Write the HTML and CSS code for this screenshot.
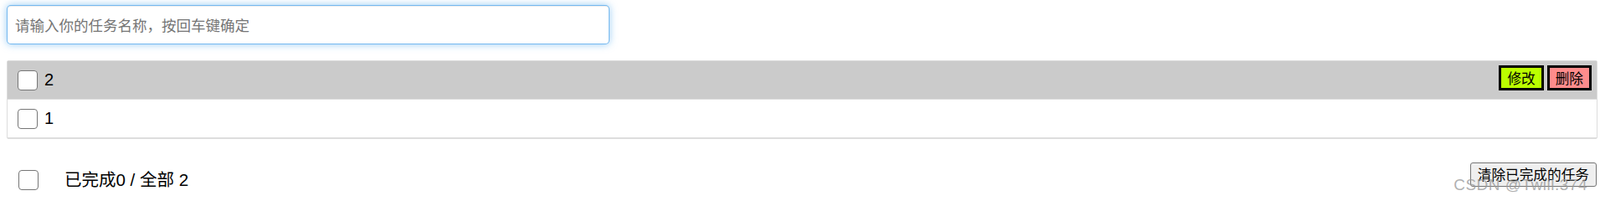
FILE: index.html
```html
<!DOCTYPE html>
<html lang="zh-CN">
<head>
<meta charset="utf-8">
<title>Todo</title>
<link rel="stylesheet" href="styles.css">
</head>
<body>
<div class="app">
  <div class="todo-header">
    <input class="todo-input" type="text" placeholder="请输入你的任务名称，按回车键确定">
  </div>
  <ul class="todo-main">
    <li class="todo-item is-hover">
      <label class="item-label"><input class="box" type="checkbox"><span class="item-text">2</span></label>
      <div class="item-actions">
        <button class="btn btn-edit">修改</button>
        <button class="btn btn-del">删除</button>
      </div>
    </li>
    <li class="todo-item">
      <label class="item-label"><input class="box" type="checkbox"><span class="item-text">1</span></label>
    </li>
  </ul>
  <div class="todo-footer">
    <label class="footer-label"><input class="box box-all" type="checkbox"><span class="footer-text">已完成0 / 全部 2</span></label>
    <button class="btn-clear">清除已完成的任务</button>
  </div>
  <div class="watermark">CSDN @Twill.374</div>
</div>
</body>
</html>
```

FILE: styles.css
```css
html, body {
  margin: 0;
  padding: 0;
  overflow: hidden;
  background: #fff;
}

body {
  font-family: "Liberation Sans", "Noto Sans CJK SC", sans-serif;
  color: #000;
}

.app {
  position: relative;
  width: 1900px;
  height: 232px;
  padding: 6px 0 0 8px;
  box-sizing: border-box;
}

.todo-header {
  display: block;
}

.todo-input {
  display: block;
  box-sizing: border-box;
  width: 720px;
  height: 47px;
  margin: 0;
  padding: 0 9px;
  font-family: "Noto Sans CJK SC", sans-serif;
  font-size: 17.5px;
  color: #000;
  background: #fff;
  border: 1px solid rgba(82, 168, 236, 0.8);
  border-radius: 5px;
  box-shadow: inset 0 1px 1px rgba(0, 0, 0, 0.075), 0 0 10px rgba(82, 168, 236, 0.6);
  outline: none;
}

.todo-input::placeholder {
  color: #757575;
}

.todo-main {
  list-style: none;
  margin: 19px 0 0 0;
  padding: 0;
  width: 1900px;
  box-sizing: border-box;
  border: 1px solid #ddd;
  border-radius: 2px;
}

.todo-item {
  display: flex;
  align-items: center;
  height: 46px;
  box-sizing: border-box;
  padding: 0 6px;
  border-bottom: 1px solid #ddd;
}

.todo-item.is-hover {
  background: #cbcbcb;
}

.item-label {
  display: flex;
  align-items: center;
}

.box {
  appearance: none;
  -webkit-appearance: none;
  width: 24px;
  height: 24px;
  margin: 0 8px 0 6px;
  box-sizing: border-box;
  border: 1px solid #767676;
  border-radius: 4px;
  background: #fff;
}

.item-text {
  font-size: 20px;
  font-family: "Liberation Sans", "Noto Sans CJK SC", sans-serif;
}

.item-actions {
  margin-left: auto;
  align-self: flex-start;
  margin-top: 5px;
  display: flex;
  gap: 4px;
}

.btn {
  height: 30px;
  box-sizing: border-box;
  padding: 0 7px;
  border: 3px solid #000;
  border-radius: 0;
  font-family: "Noto Sans CJK SC", sans-serif;
  font-size: 16.67px;
  line-height: 22px;
  color: #000;
}

.btn-edit {
  background: #bbff00;
}

.btn-del {
  background: #ff8c8c;
}

.todo-footer {
  display: flex;
  align-items: center;
  height: 50px;
  margin-top: 24px;
  padding-left: 8px;
  width: 1900px;
  box-sizing: border-box;
}

.footer-label {
  display: flex;
  align-items: center;
}

.box-all {
  margin: 0 31px 0 6px;
}

.footer-text {
  position: relative;
  top: -2px;
  font-size: 20.5px;
  font-family: "Liberation Sans", "Noto Sans CJK SC", sans-serif;
}

.btn-clear {
  margin-left: auto;
  margin-right: 1px;
  align-self: flex-start;
  margin-top: 4px;
  height: 29px;
  box-sizing: border-box;
  padding: 0 8px;
  background: #efefef;
  border: 1px solid #767676;
  border-radius: 3px;
  font-family: "Noto Sans CJK SC", sans-serif;
  font-size: 16.67px;
  line-height: 25px;
  color: #000;
}

.watermark {
  position: absolute;
  right: 4px;
  top: 210px;
  font-family: "Liberation Sans", sans-serif;
  font-size: 19px;
  color: rgba(150, 150, 150, 0.75);
  letter-spacing: 0.5px;
  pointer-events: none;
}
```
